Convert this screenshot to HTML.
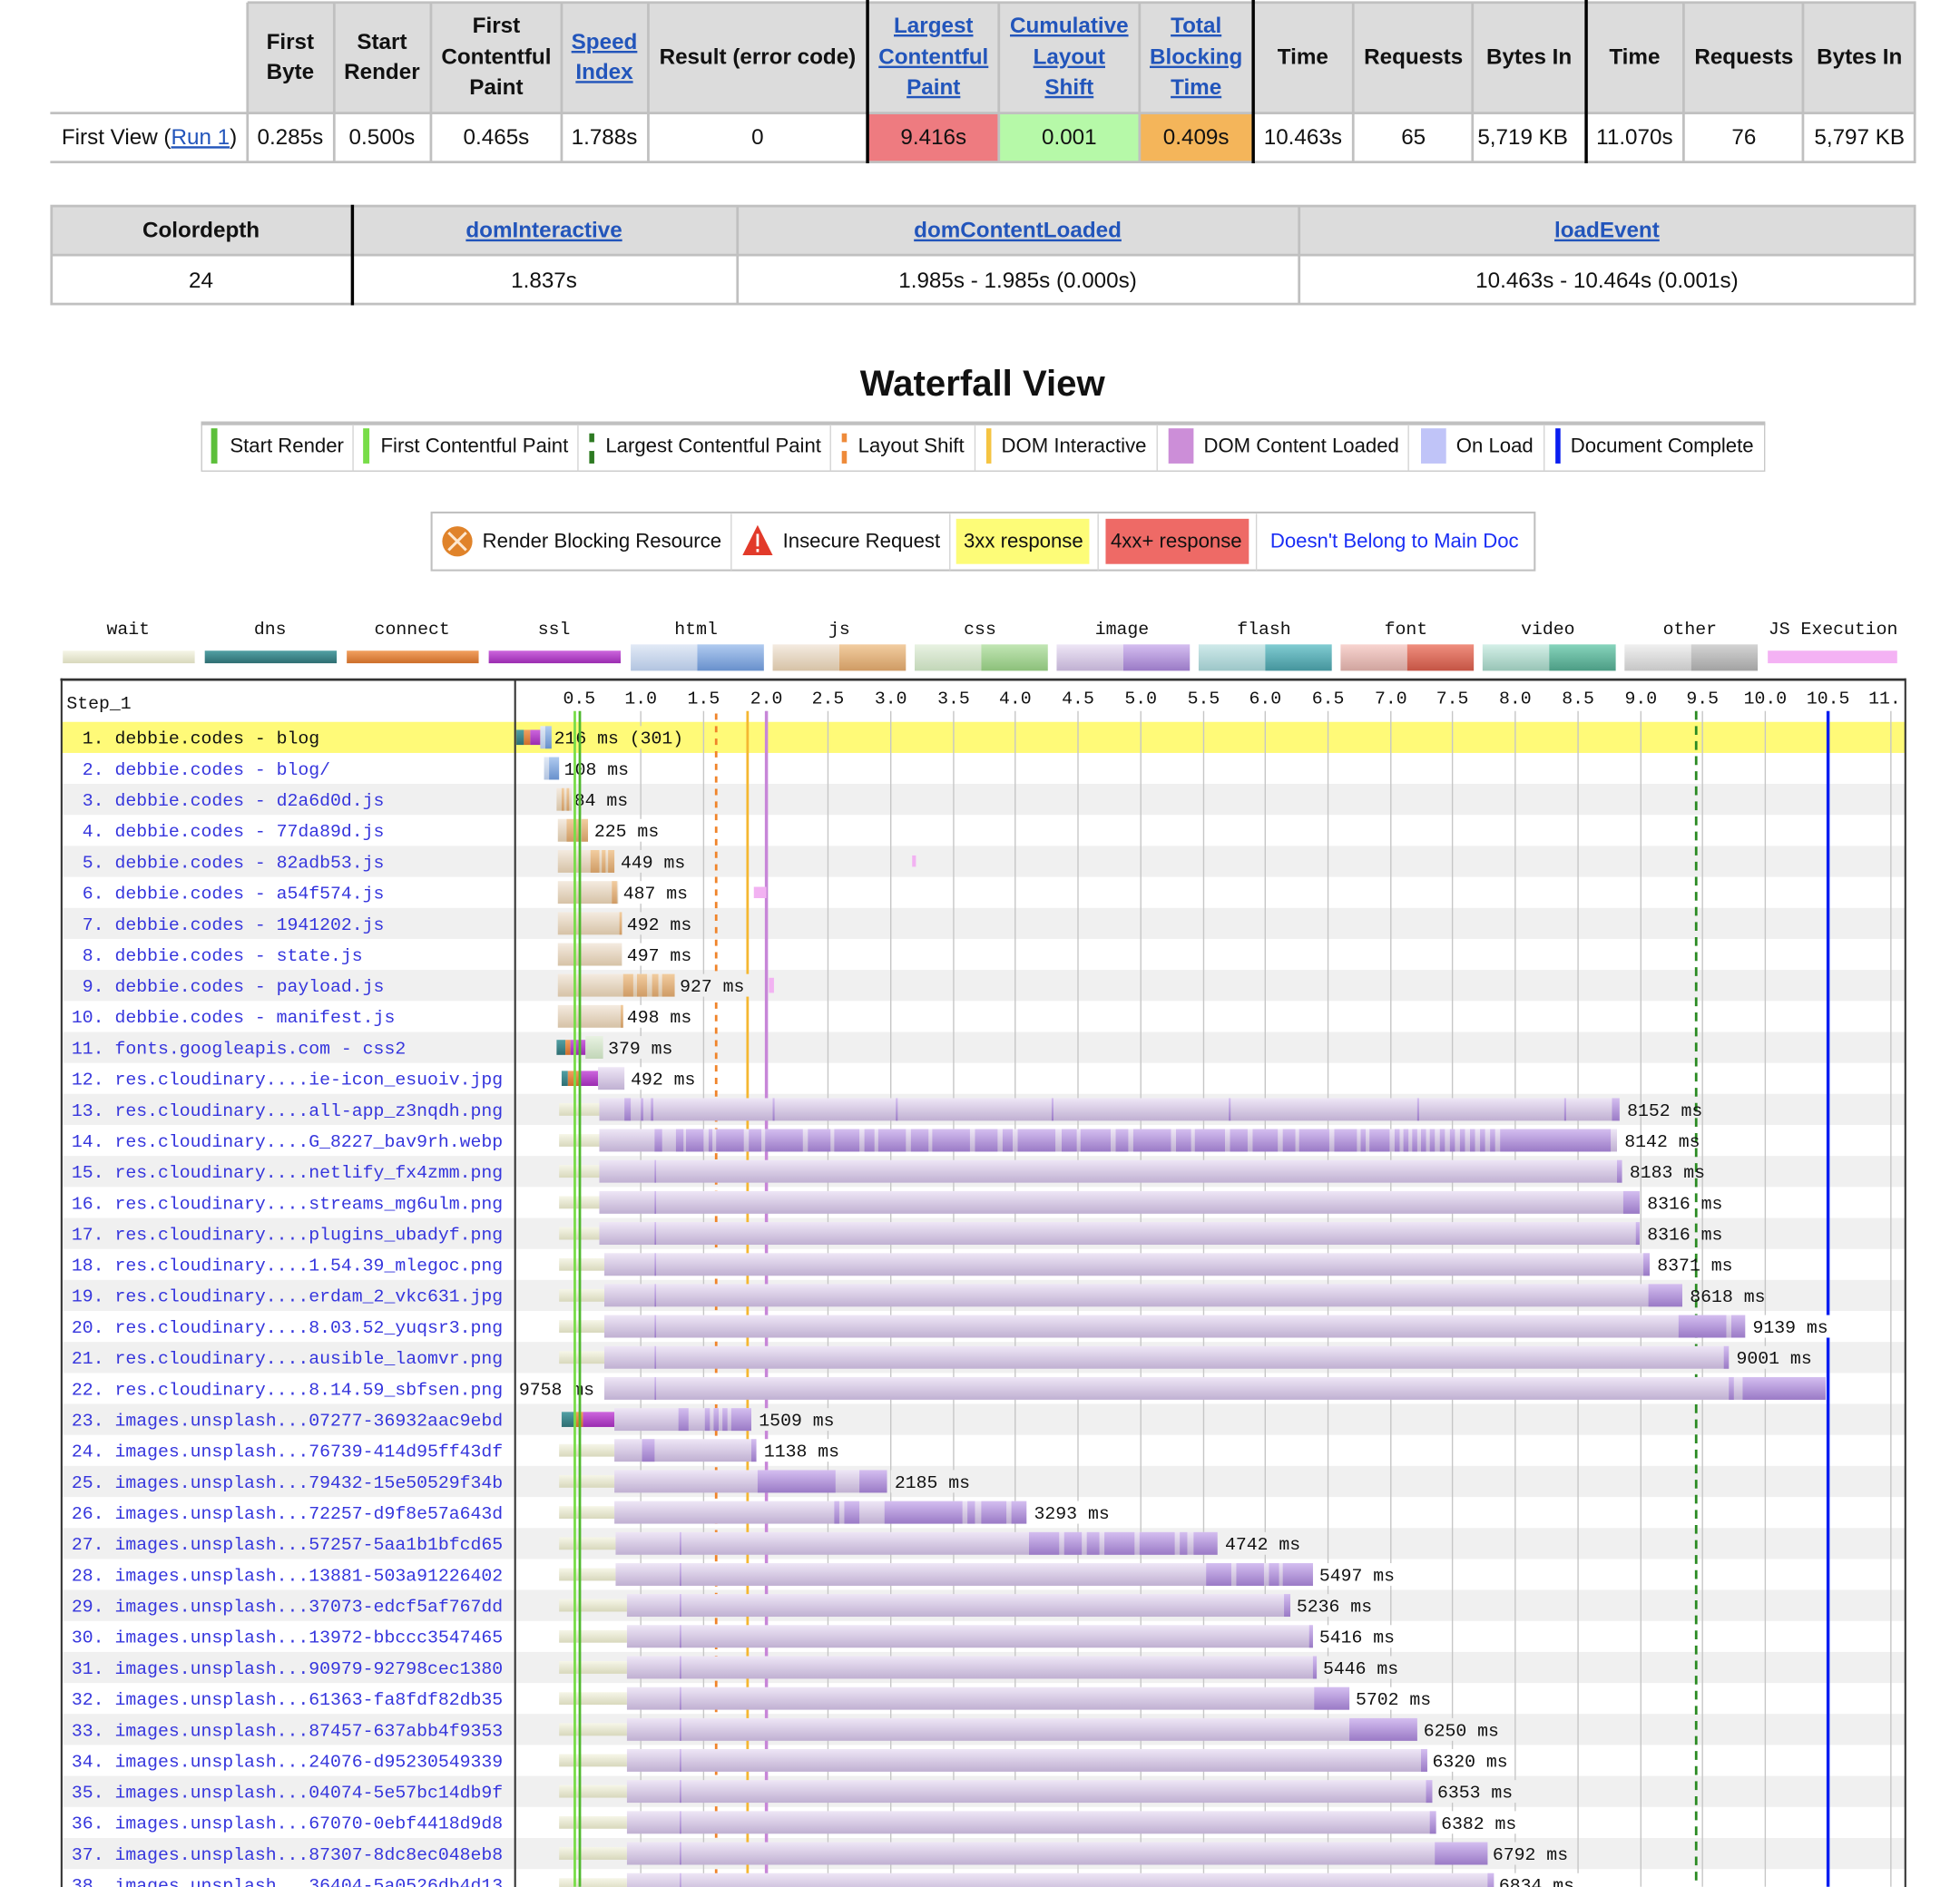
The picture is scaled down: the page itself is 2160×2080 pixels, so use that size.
<!DOCTYPE html>
<html><head><meta charset="utf-8"><style>
html,body{margin:0;padding:0;background:#fff;width:2160px;height:2080px;overflow:hidden}
svg{display:block}
.s{font-family:"Liberation Sans",Arial,sans-serif;font-size:17.5px;fill:#111}
.b{font-weight:bold}
.l{fill:#2255bb;text-decoration:underline}
.m{font-family:"Liberation Mono","DejaVu Sans Mono",monospace;font-size:14.3px;fill:#111}
.lb{fill:#3535dd}
.lg{font-family:"Liberation Sans",Arial,sans-serif;font-size:16px;fill:#111}
</style></head><body>
<svg width="2160" height="2080" viewBox="0 0 1560 1502.2" preserveAspectRatio="none" xmlns="http://www.w3.org/2000/svg">
<defs>
<linearGradient id="iL" x1="0" y1="0" x2="0" y2="1"><stop offset="0" stop-color="#eee6f6"/><stop offset="1" stop-color="#c0b0d2"/></linearGradient>
<linearGradient id="iD" x1="0" y1="0" x2="0" y2="1"><stop offset="0" stop-color="#d4bef0"/><stop offset="1" stop-color="#9a7ac6"/></linearGradient>
<linearGradient id="jL" x1="0" y1="0" x2="0" y2="1"><stop offset="0" stop-color="#f4ebe0"/><stop offset="1" stop-color="#d6c2a6"/></linearGradient>
<linearGradient id="jD" x1="0" y1="0" x2="0" y2="1"><stop offset="0" stop-color="#f2cda0"/><stop offset="1" stop-color="#cf9b64"/></linearGradient>
<linearGradient id="hL" x1="0" y1="0" x2="0" y2="1"><stop offset="0" stop-color="#e2eaf6"/><stop offset="1" stop-color="#b2c4e0"/></linearGradient>
<linearGradient id="hD" x1="0" y1="0" x2="0" y2="1"><stop offset="0" stop-color="#b0cbf0"/><stop offset="1" stop-color="#6890cc"/></linearGradient>
<linearGradient id="cL" x1="0" y1="0" x2="0" y2="1"><stop offset="0" stop-color="#e8f2e2"/><stop offset="1" stop-color="#c2d6b8"/></linearGradient>
<linearGradient id="cD" x1="0" y1="0" x2="0" y2="1"><stop offset="0" stop-color="#c2e6b4"/><stop offset="1" stop-color="#8cc07a"/></linearGradient>
<linearGradient id="fL" x1="0" y1="0" x2="0" y2="1"><stop offset="0" stop-color="#cfeaea"/><stop offset="1" stop-color="#9cc6c8"/></linearGradient>
<linearGradient id="fD" x1="0" y1="0" x2="0" y2="1"><stop offset="0" stop-color="#80ccd2"/><stop offset="1" stop-color="#45949c"/></linearGradient>
<linearGradient id="nL" x1="0" y1="0" x2="0" y2="1"><stop offset="0" stop-color="#f8d4d0"/><stop offset="1" stop-color="#d0a49e"/></linearGradient>
<linearGradient id="nD" x1="0" y1="0" x2="0" y2="1"><stop offset="0" stop-color="#f08e7e"/><stop offset="1" stop-color="#c45444"/></linearGradient>
<linearGradient id="vL" x1="0" y1="0" x2="0" y2="1"><stop offset="0" stop-color="#d4f0e8"/><stop offset="1" stop-color="#98c4b6"/></linearGradient>
<linearGradient id="vD" x1="0" y1="0" x2="0" y2="1"><stop offset="0" stop-color="#86d4bc"/><stop offset="1" stop-color="#4c9c84"/></linearGradient>
<linearGradient id="oL" x1="0" y1="0" x2="0" y2="1"><stop offset="0" stop-color="#f0f0f0"/><stop offset="1" stop-color="#c6c6c6"/></linearGradient>
<linearGradient id="oD" x1="0" y1="0" x2="0" y2="1"><stop offset="0" stop-color="#d4d4d4"/><stop offset="1" stop-color="#a2a2a2"/></linearGradient>
<linearGradient id="w" x1="0" y1="0" x2="0" y2="1"><stop offset="0" stop-color="#f6f6e8"/><stop offset="1" stop-color="#d8d8bc"/></linearGradient>
<linearGradient id="dn" x1="0" y1="0" x2="0" y2="1"><stop offset="0" stop-color="#52a0a4"/><stop offset="1" stop-color="#2e6e72"/></linearGradient>
<linearGradient id="co" x1="0" y1="0" x2="0" y2="1"><stop offset="0" stop-color="#f2a060"/><stop offset="1" stop-color="#cc6e2a"/></linearGradient>
<linearGradient id="ss" x1="0" y1="0" x2="0" y2="1"><stop offset="0" stop-color="#cc66dd"/><stop offset="1" stop-color="#9a2cb0"/></linearGradient>
</defs>

<!-- ===== Top table ===== -->
<rect x="197" y="2" width="1328" height="88" fill="#dcdcdc"/>
<rect x="690" y="90" width="105" height="40" fill="#ee7b80"/>
<rect x="795" y="90" width="112" height="40" fill="#b6f9a8"/>
<rect x="907" y="90" width="90" height="40" fill="#f4b55a"/>
<g stroke="#c0c0c0" stroke-width="2">
<line x1="197" y1="2" x2="1525" y2="2"/>
<line x1="40" y1="90" x2="1525" y2="90"/>
<line x1="40" y1="129" x2="1525" y2="129"/>
<line x1="197" y1="2" x2="197" y2="130"/>
<line x1="266" y1="2" x2="266" y2="130"/>
<line x1="343" y1="2" x2="343" y2="130"/>
<line x1="447" y1="2" x2="447" y2="130"/>
<line x1="516" y1="2" x2="516" y2="130"/>
<line x1="795" y1="2" x2="795" y2="130"/>
<line x1="907" y1="2" x2="907" y2="130"/>
<line x1="1077" y1="2" x2="1077" y2="130"/>
<line x1="1172" y1="2" x2="1172" y2="130"/>
<line x1="1340" y1="2" x2="1340" y2="130"/>
<line x1="1435" y1="2" x2="1435" y2="130"/>
<line x1="1524" y1="2" x2="1524" y2="130"/>
</g>
<g stroke="#000" stroke-width="2.5">
<line x1="690.5" y1="0" x2="690.5" y2="130"/>
<line x1="997.5" y1="0" x2="997.5" y2="130"/>
<line x1="1262.5" y1="0" x2="1262.5" y2="130"/>
</g>
<g class="s b" text-anchor="middle">
<text x="231" y="39">First</text><text x="231" y="63">Byte</text>
<text x="304" y="39">Start</text><text x="304" y="63">Render</text>
<text x="395" y="26">First</text><text x="395" y="51">Contentful</text><text x="395" y="75">Paint</text>
<text x="481" y="39" class="l">Speed</text><text x="481" y="63" class="l">Index</text>
<text x="603" y="51">Result (error code)</text>
<text x="743" y="26" class="l">Largest</text><text x="743" y="51" class="l">Contentful</text><text x="743" y="75" class="l">Paint</text>
<text x="851" y="26" class="l">Cumulative</text><text x="851" y="51" class="l">Layout</text><text x="851" y="75" class="l">Shift</text>
<text x="952" y="26" class="l">Total</text><text x="952" y="51" class="l">Blocking</text><text x="952" y="75" class="l">Time</text>
<text x="1037" y="51">Time</text><text x="1125" y="51">Requests</text><text x="1217" y="51">Bytes In</text>
<text x="1301" y="51">Time</text><text x="1388" y="51">Requests</text><text x="1480" y="51">Bytes In</text>
</g>
<g class="s" text-anchor="middle">
<text x="49" y="115" text-anchor="start">First View (<tspan class="l">Run 1</tspan>)</text>
<text x="231" y="115">0.285s</text><text x="304" y="115">0.500s</text><text x="395" y="115">0.465s</text>
<text x="481" y="115">1.788s</text><text x="603" y="115">0</text><text x="743" y="115">9.416s</text>
<text x="851" y="115">0.001</text><text x="952" y="115">0.409s</text><text x="1037" y="115">10.463s</text>
<text x="1125" y="115">65</text><text x="1212" y="115">5,719 KB</text><text x="1301" y="115">11.070s</text>
<text x="1388" y="115">76</text><text x="1480" y="115">5,797 KB</text>
</g>

<!-- ===== Second table ===== -->
<rect x="41" y="164" width="1483" height="39" fill="#dcdcdc"/>
<g stroke="#c0c0c0" stroke-width="2" fill="none">
<rect x="41" y="164" width="1483" height="78"/>
<line x1="41" y1="203" x2="1524" y2="203"/>
<line x1="587" y1="164" x2="587" y2="242"/>
<line x1="1034" y1="164" x2="1034" y2="242"/>
</g>
<line x1="280.5" y1="163" x2="280.5" y2="243" stroke="#000" stroke-width="2.5"/>
<g class="s" text-anchor="middle">
<text x="160" y="189" class="b">Colordepth</text>
<text x="433" y="189" class="b l">domInteractive</text>
<text x="810" y="189" class="b l">domContentLoaded</text>
<text x="1279" y="189" class="b l">loadEvent</text>
<text x="160" y="229">24</text>
<text x="433" y="229">1.837s</text>
<text x="810" y="229">1.985s - 1.985s (0.000s)</text>
<text x="1279" y="229">10.463s - 10.464s (0.001s)</text>
</g>

<!-- ===== Title ===== -->
<text x="782" y="315" text-anchor="middle" font-family="Liberation Sans,Arial,sans-serif" font-size="29" font-weight="bold" fill="#111">Waterfall View</text>

<!-- ===== Legend 1 ===== -->
<rect x="160.5" y="337" width="1244" height="38" fill="#fff" stroke="#c8c8c8" stroke-width="1"/>
<line x1="160" y1="337" x2="1405" y2="337" stroke="#c0c0c0" stroke-width="3"/>
<g stroke="#d4d4d4" stroke-width="1">
<line x1="281" y1="338" x2="281" y2="375"/><line x1="460" y1="338" x2="460" y2="375"/>
<line x1="661" y1="338" x2="661" y2="375"/><line x1="776" y1="338" x2="776" y2="375"/>
<line x1="921" y1="338" x2="921" y2="375"/><line x1="1121" y1="338" x2="1121" y2="375"/>
<line x1="1229" y1="338" x2="1229" y2="375"/>
</g>
<rect x="168" y="341" width="5" height="28" fill="#5cbf3a"/>
<rect x="289" y="341" width="5" height="28" fill="#78dd48"/>
<rect x="469" y="345" width="4" height="7" fill="#2d7a22"/><rect x="469" y="359" width="4" height="10" fill="#2d7a22"/>
<rect x="670" y="345" width="4" height="7" fill="#ee8a3a"/><rect x="670" y="359" width="4" height="10" fill="#ee8a3a"/>
<rect x="785" y="341" width="4" height="28" fill="#f5c442"/>
<rect x="930" y="341" width="20" height="28" fill="#cc8ed8"/>
<rect x="1131" y="341" width="20" height="28" fill="#c0c4f8"/>
<rect x="1238" y="341" width="4" height="28" fill="#0a1ef0"/>
<g class="lg">
<text x="183" y="360">Start Render</text>
<text x="303" y="360">First Contentful Paint</text>
<text x="482" y="360">Largest Contentful Paint</text>
<text x="683" y="360">Layout Shift</text>
<text x="797" y="360">DOM Interactive</text>
<text x="958" y="360">DOM Content Loaded</text>
<text x="1159" y="360">On Load</text>
<text x="1250" y="360">Document Complete</text>
</g>

<!-- ===== Legend 2 ===== -->
<rect x="343.5" y="408" width="878" height="46" fill="#fff" stroke="#c0c0c0" stroke-width="1.5"/>
<g stroke="#d4d4d4"><line x1="582" y1="409" x2="582" y2="454"/><line x1="756" y1="409" x2="756" y2="454"/><line x1="874" y1="409" x2="874" y2="454"/><line x1="1000" y1="409" x2="1000" y2="454"/></g>
<circle cx="364" cy="431" r="12" fill="#e0832a"/>
<path d="M357 424 L371 438 M371 424 L357 438" stroke="#fde8d0" stroke-width="2.2"/>
<path d="M603 418 L615 442 L591 442 Z" fill="#e23a2a"/>
<rect x="602" y="425" width="2" height="10" fill="#fff"/><rect x="602" y="437" width="2" height="2.5" fill="#fff"/>
<rect x="761" y="413" width="106" height="36" fill="#fdfc78"/>
<rect x="880" y="413" width="114" height="36" fill="#ee6a66"/>
<g class="lg">
<text x="384" y="436">Render Blocking Resource</text>
<text x="623" y="436">Insecure Request</text>
<text x="767" y="436">3xx response</text>
<text x="884" y="436">4xx+ response</text>
<text x="1011" y="436" fill="#1a2ef5">Doesn't Belong to Main Doc</text>
</g>

<!-- ===== Waterfall legend ===== -->
<g class="m" text-anchor="middle">
<text x="102" y="505">wait</text><text x="215" y="505">dns</text><text x="328" y="505">connect</text>
<text x="441" y="505">ssl</text><text x="554" y="505">html</text><text x="668" y="505">js</text>
<text x="780" y="505">css</text><text x="893" y="505">image</text><text x="1006" y="505">flash</text>
<text x="1119" y="505">font</text><text x="1232" y="505">video</text><text x="1345" y="505">other</text>
<text x="1459" y="505">JS Execution</text>
</g>
<rect x="50" y="518" width="105" height="10" fill="url(#w)"/>
<rect x="163" y="518" width="105" height="10" fill="url(#dn)"/>
<rect x="276" y="518" width="105" height="10" fill="url(#co)"/>
<rect x="389" y="518" width="105" height="10" fill="url(#ss)"/>
<rect x="502" y="513" width="53" height="21" fill="url(#hL)"/><rect x="555" y="513" width="53" height="21" fill="url(#hD)"/>
<rect x="615" y="513" width="53" height="21" fill="url(#jL)"/><rect x="668" y="513" width="53" height="21" fill="url(#jD)"/>
<rect x="728" y="513" width="53" height="21" fill="url(#cL)"/><rect x="781" y="513" width="53" height="21" fill="url(#cD)"/>
<rect x="841" y="513" width="53" height="21" fill="url(#iL)"/><rect x="894" y="513" width="53" height="21" fill="url(#iD)"/>
<rect x="954" y="513" width="53" height="21" fill="url(#fL)"/><rect x="1007" y="513" width="53" height="21" fill="url(#fD)"/>
<rect x="1067" y="513" width="53" height="21" fill="url(#nL)"/><rect x="1120" y="513" width="53" height="21" fill="url(#nD)"/>
<rect x="1180" y="513" width="53" height="21" fill="url(#vL)"/><rect x="1233" y="513" width="53" height="21" fill="url(#vD)"/>
<rect x="1293" y="513" width="53" height="21" fill="url(#oL)"/><rect x="1346" y="513" width="53" height="21" fill="url(#oD)"/>
<rect x="1407" y="518" width="103" height="10" fill="#f4b2f4"/>

<!-- ===== Waterfall chart ===== -->
<rect x="49" y="574.7" width="1467" height="24.7" fill="#fffa78"/>
<g fill="#f0f0f0">
<rect x="49" y="624.0" width="1467" height="24.7"/><rect x="49" y="673.4" width="1467" height="24.7"/>
<rect x="49" y="722.8" width="1467" height="24.7"/><rect x="49" y="772.1" width="1467" height="24.7"/>
<rect x="49" y="821.5" width="1467" height="24.7"/><rect x="49" y="870.8" width="1467" height="24.7"/>
<rect x="49" y="920.2" width="1467" height="24.7"/><rect x="49" y="969.6" width="1467" height="24.7"/>
<rect x="49" y="1018.9" width="1467" height="24.7"/><rect x="49" y="1068.3" width="1467" height="24.7"/>
<rect x="49" y="1117.6" width="1467" height="24.7"/><rect x="49" y="1167.0" width="1467" height="24.7"/>
<rect x="49" y="1216.4" width="1467" height="24.7"/><rect x="49" y="1265.7" width="1467" height="24.7"/>
<rect x="49" y="1315.1" width="1467" height="24.7"/><rect x="49" y="1364.4" width="1467" height="24.7"/>
<rect x="49" y="1413.8" width="1467" height="24.7"/><rect x="49" y="1463.2" width="1467" height="24.7"/>
</g>
<g stroke="#c6c6c6" stroke-width="1">
<line x1="510" y1="566" x2="510" y2="1502"/><line x1="560" y1="566" x2="560" y2="1502"/>
<line x1="610" y1="566" x2="610" y2="1502"/><line x1="659" y1="566" x2="659" y2="1502"/>
<line x1="709" y1="566" x2="709" y2="1502"/><line x1="759" y1="566" x2="759" y2="1502"/>
<line x1="808" y1="566" x2="808" y2="1502"/><line x1="858" y1="566" x2="858" y2="1502"/>
<line x1="908" y1="566" x2="908" y2="1502"/><line x1="958" y1="566" x2="958" y2="1502"/>
<line x1="1007" y1="566" x2="1007" y2="1502"/><line x1="1057" y1="566" x2="1057" y2="1502"/>
<line x1="1107" y1="566" x2="1107" y2="1502"/><line x1="1156" y1="566" x2="1156" y2="1502"/>
<line x1="1206" y1="566" x2="1206" y2="1502"/><line x1="1256" y1="566" x2="1256" y2="1502"/>
<line x1="1306" y1="566" x2="1306" y2="1502"/><line x1="1355" y1="566" x2="1355" y2="1502"/>
<line x1="1405" y1="566" x2="1405" y2="1502"/><line x1="1455" y1="566" x2="1455" y2="1502"/>
<line x1="1505" y1="566" x2="1505" y2="1502"/>
</g>
<g class="m" text-anchor="middle">
<text x="461" y="560">0.5</text><text x="510" y="560">1.0</text><text x="560" y="560">1.5</text>
<text x="610" y="560">2.0</text><text x="659" y="560">2.5</text><text x="709" y="560">3.0</text>
<text x="759" y="560">3.5</text><text x="808" y="560">4.0</text><text x="858" y="560">4.5</text>
<text x="908" y="560">5.0</text><text x="958" y="560">5.5</text><text x="1007" y="560">6.0</text>
<text x="1057" y="560">6.5</text><text x="1107" y="560">7.0</text><text x="1156" y="560">7.5</text>
<text x="1206" y="560">8.0</text><text x="1256" y="560">8.5</text><text x="1306" y="560">9.0</text>
<text x="1355" y="560">9.5</text><text x="1405" y="560">10.0</text><text x="1455" y="560">10.5</text>
<text x="1500" y="560">11.</text>
</g>
<text x="53" y="564" class="m">Step_1</text>
<line x1="570" y1="568" x2="570" y2="1502" stroke="#f0842a" stroke-width="2" stroke-dasharray="5,5"/>
<line x1="595" y1="566" x2="595" y2="1502" stroke="#f5b731" stroke-width="2"/>
<line x1="610" y1="566" x2="610" y2="1502" stroke="#c786d8" stroke-width="2.5"/>
<line x1="1350" y1="566" x2="1350" y2="1502" stroke="#2a8a22" stroke-width="2" stroke-dasharray="7,5"/>
<line x1="1455" y1="566" x2="1455" y2="1502" stroke="#0a1ef0" stroke-width="2.5"/>
<rect x="600" y="706" width="10" height="9" fill="#f2b2f2"/>
<rect x="726" y="681" width="3" height="9" fill="#f2b2f2"/>

<g transform="translate(0,587)">
<rect x="411" y="-6" width="6" height="12" fill="url(#dn)"/><rect x="417" y="-6" width="5" height="12" fill="url(#co)"/><rect x="422" y="-6" width="8" height="12" fill="url(#ss)"/>
<rect x="430" y="-9" width="4" height="18" fill="url(#hL)"/><rect x="434" y="-9" width="5" height="18" fill="url(#hD)"/>
<rect x="440" y="-9" width="106" height="18" fill="#fffa78"/>
<text x="441" y="5" class="m">216 ms (301)</text></g>
<g transform="translate(0,611.7)">
<rect x="433" y="-9" width="4" height="18" fill="url(#hL)"/><rect x="437" y="-9" width="8" height="18" fill="url(#hD)"/>
<rect x="447" y="-9" width="58" height="18" fill="#fff"/><text x="449" y="5" class="m">108 ms</text></g>
<g transform="translate(0,636.4)">
<rect x="443" y="-9" width="12" height="18" fill="url(#jL)"/><rect x="447" y="-9" width="2" height="18" fill="url(#jD)"/><rect x="451" y="-9" width="2" height="18" fill="url(#jD)"/>
<rect x="456" y="-9" width="48" height="18" fill="#f0f0f0"/><text x="457" y="5" class="m">84 ms</text></g>
<g transform="translate(0,661)">
<rect x="444" y="-9" width="24" height="18" fill="url(#jL)"/><rect x="451" y="-9" width="10" height="18" fill="url(#jD)"/><rect x="463" y="-9" width="5" height="18" fill="url(#jD)"/>
<rect x="471" y="-9" width="58" height="18" fill="#fff"/><text x="473" y="5" class="m">225 ms</text></g>
<g transform="translate(0,685.7)">
<rect x="444" y="-9" width="45" height="18" fill="url(#jL)"/><rect x="470" y="-9" width="7" height="18" fill="url(#jD)"/><rect x="479" y="-9" width="3" height="18" fill="url(#jD)"/><rect x="484" y="-9" width="5" height="18" fill="url(#jD)"/>
<rect x="492" y="-9" width="58" height="18" fill="#f0f0f0"/><text x="494" y="5" class="m">449 ms</text></g>
<g transform="translate(0,710.4)">
<rect x="444" y="-9" width="48" height="18" fill="url(#jL)"/><rect x="487" y="-9" width="4" height="18" fill="url(#jD)"/>
<rect x="494" y="-9" width="58" height="18" fill="#fff"/><text x="496" y="5" class="m">487 ms</text></g>
<g transform="translate(0,735.1)">
<rect x="444" y="-9" width="51" height="18" fill="url(#jL)"/><rect x="493" y="-9" width="2" height="18" fill="url(#jD)"/>
<rect x="497" y="-9" width="58" height="18" fill="#f0f0f0"/><text x="499" y="5" class="m">492 ms</text></g>
<g transform="translate(0,759.8)">
<rect x="444" y="-9" width="51" height="18" fill="url(#jL)"/>
<rect x="497" y="-9" width="58" height="18" fill="#fff"/><text x="499" y="5" class="m">497 ms</text></g>
<g transform="translate(0,784.4)">
<rect x="444" y="-9" width="93" height="18" fill="url(#jL)"/><rect x="496" y="-9" width="8" height="18" fill="url(#jD)"/><rect x="507" y="-9" width="8" height="18" fill="url(#jD)"/><rect x="519" y="-9" width="5" height="18" fill="url(#jD)"/><rect x="527" y="-9" width="10" height="18" fill="url(#jD)"/>
<rect x="539" y="-9" width="58" height="18" fill="#f0f0f0"/><text x="541" y="5" class="m">927 ms</text>
<rect x="612" y="-6" width="4" height="12" fill="#f2b2f2"/></g>
<g transform="translate(0,809.1)">
<rect x="444" y="-9" width="52" height="18" fill="url(#jL)"/><rect x="494" y="-9" width="2" height="18" fill="url(#jD)"/>
<rect x="497" y="-9" width="58" height="18" fill="#fff"/><text x="499" y="5" class="m">498 ms</text></g>
<g transform="translate(0,833.8)">
<rect x="443" y="-6" width="7" height="12" fill="url(#dn)"/><rect x="450" y="-6" width="4" height="12" fill="url(#co)"/><rect x="454" y="-6" width="12" height="12" fill="url(#ss)"/>
<rect x="466" y="-9" width="14" height="18" fill="url(#cL)"/>
<rect x="482" y="-9" width="58" height="18" fill="#f0f0f0"/><text x="484" y="5" class="m">379 ms</text></g>
<g transform="translate(0,858.5)">
<rect x="447" y="-6" width="5" height="12" fill="url(#dn)"/><rect x="452" y="-6" width="10" height="12" fill="url(#co)"/><rect x="462" y="-6" width="14" height="12" fill="url(#ss)"/>
<rect x="476" y="-9" width="21" height="18" fill="url(#iL)"/>
<rect x="500" y="-9" width="58" height="18" fill="#fff"/><text x="502" y="5" class="m">492 ms</text></g>

<g transform="translate(0,883.2)">
<rect x="445" y="-5" width="32" height="10" fill="url(#w)"/>
<rect x="477" y="-9" width="812" height="18" fill="url(#iL)"/>
<g fill="url(#iD)"><rect x="497" y="-9" width="5" height="18"/><rect x="510" y="-9" width="2" height="18"/><rect x="518" y="-9" width="2" height="18"/><rect x="615" y="-9" width="1.5" height="18"/><rect x="713" y="-9" width="1.5" height="18"/><rect x="837" y="-9" width="1.5" height="18"/><rect x="978" y="-9" width="1.5" height="18"/><rect x="1128" y="-9" width="1.5" height="18"/><rect x="1245" y="-9" width="1.5" height="18"/><rect x="1283" y="-9" width="6" height="18"/></g>
<text x="1295" y="5" class="m">8152 ms</text></g>
<g transform="translate(0,907.8)">
<rect x="445" y="-5" width="32" height="10" fill="url(#w)"/>
<rect x="477" y="-9" width="810" height="18" fill="url(#iL)"/>
<g fill="url(#iD)"><rect x="521" y="-9" width="6" height="18"/><rect x="538" y="-9" width="6" height="18"/><rect x="546" y="-9" width="14" height="18"/><rect x="564" y="-9" width="3" height="18"/><rect x="570" y="-9" width="22" height="18"/><rect x="596" y="-9" width="10" height="18"/><rect x="609" y="-9" width="30" height="18"/><rect x="643" y="-9" width="18" height="18"/><rect x="664" y="-9" width="20" height="18"/><rect x="688" y="-9" width="8" height="18"/><rect x="699" y="-9" width="22" height="18"/><rect x="725" y="-9" width="14" height="18"/><rect x="742" y="-9" width="30" height="18"/><rect x="776" y="-9" width="18" height="18"/><rect x="798" y="-9" width="8" height="18"/><rect x="810" y="-9" width="30" height="18"/><rect x="845" y="-9" width="12" height="18"/><rect x="860" y="-9" width="24" height="18"/><rect x="888" y="-9" width="10" height="18"/><rect x="902" y="-9" width="30" height="18"/><rect x="936" y="-9" width="12" height="18"/><rect x="951" y="-9" width="24" height="18"/><rect x="979" y="-9" width="14" height="18"/><rect x="997" y="-9" width="20" height="18"/><rect x="1021" y="-9" width="10" height="18"/><rect x="1034" y="-9" width="24" height="18"/><rect x="1062" y="-9" width="18" height="18"/><rect x="1083" y="-9" width="4" height="18"/><rect x="1090" y="-9" width="16" height="18"/><rect x="1110" y="-9" width="4" height="18"/><rect x="1117" y="-9" width="4" height="18"/><rect x="1124" y="-9" width="4" height="18"/><rect x="1131" y="-9" width="4" height="18"/><rect x="1138" y="-9" width="4" height="18"/><rect x="1146" y="-9" width="4" height="18"/><rect x="1154" y="-9" width="4" height="18"/><rect x="1162" y="-9" width="4" height="18"/><rect x="1170" y="-9" width="4" height="18"/><rect x="1178" y="-9" width="4" height="18"/><rect x="1186" y="-9" width="4" height="18"/><rect x="1194" y="-9" width="88" height="18"/></g>
<text x="1293" y="5" class="m">8142 ms</text></g>
<g transform="translate(0,932.5)">
<rect x="445" y="-5" width="32" height="10" fill="url(#w)"/>
<rect x="477" y="-9" width="814" height="18" fill="url(#iL)"/><rect x="521" y="-9" width="1.2" height="18" fill="url(#iD)"/><rect x="1287" y="-9" width="4" height="18" fill="url(#iD)"/>
<text x="1297" y="5" class="m">8183 ms</text></g>
<g transform="translate(0,957.2)">
<rect x="445" y="-5" width="32" height="10" fill="url(#w)"/>
<rect x="477" y="-9" width="828" height="18" fill="url(#iL)"/><rect x="521" y="-9" width="1.2" height="18" fill="url(#iD)"/><rect x="1292" y="-9" width="13" height="18" fill="url(#iD)"/>
<text x="1311" y="5" class="m">8316 ms</text></g>
<g transform="translate(0,981.9)">
<rect x="445" y="-5" width="32" height="10" fill="url(#w)"/>
<rect x="477" y="-9" width="828" height="18" fill="url(#iL)"/><rect x="521" y="-9" width="1.2" height="18" fill="url(#iD)"/><rect x="1302" y="-9" width="3" height="18" fill="url(#iD)"/>
<text x="1311" y="5" class="m">8316 ms</text></g>
<g transform="translate(0,1006.6)">
<rect x="445" y="-5" width="36" height="10" fill="url(#w)"/>
<rect x="481" y="-9" width="832" height="18" fill="url(#iL)"/><rect x="521" y="-9" width="1.2" height="18" fill="url(#iD)"/><rect x="1308" y="-9" width="5" height="18" fill="url(#iD)"/>
<text x="1319" y="5" class="m">8371 ms</text></g>
<g transform="translate(0,1031.2)">
<rect x="445" y="-5" width="36" height="10" fill="url(#w)"/>
<rect x="481" y="-9" width="858" height="18" fill="url(#iL)"/><rect x="521" y="-9" width="1.2" height="18" fill="url(#iD)"/><rect x="1312" y="-9" width="27" height="18" fill="url(#iD)"/>
<text x="1345" y="5" class="m">8618 ms</text></g>
<g transform="translate(0,1055.9)">
<rect x="445" y="-5" width="36" height="10" fill="url(#w)"/>
<rect x="481" y="-9" width="908" height="18" fill="url(#iL)"/><rect x="521" y="-9" width="1.2" height="18" fill="url(#iD)"/><rect x="1336" y="-9" width="38" height="18" fill="url(#iD)"/><rect x="1378" y="-9" width="11" height="18" fill="url(#iD)"/>
<rect x="1392" y="-9" width="70" height="18" fill="#fff"/><text x="1395" y="5" class="m">9139 ms</text></g>
<g transform="translate(0,1080.6)">
<rect x="445" y="-5" width="36" height="10" fill="url(#w)"/>
<rect x="481" y="-9" width="895" height="18" fill="url(#iL)"/><rect x="521" y="-9" width="1.2" height="18" fill="url(#iD)"/><rect x="1372" y="-9" width="4" height="18" fill="url(#iD)"/>
<rect x="1380" y="-9" width="70" height="18" fill="#f0f0f0"/><text x="1382" y="5" class="m">9001 ms</text></g>
<g transform="translate(0,1105.3)">
<rect x="411" y="-9" width="70" height="18" fill="#fff"/><text x="413" y="5" class="m">9758 ms</text>
<rect x="481" y="-9" width="972" height="18" fill="url(#iL)"/><rect x="521" y="-9" width="1.2" height="18" fill="url(#iD)"/><rect x="1376" y="-9" width="4" height="18" fill="url(#iD)"/><rect x="1387" y="-9" width="66" height="18" fill="url(#iD)"/></g>

<g transform="translate(0,1130)">
<rect x="447" y="-6" width="11" height="12" fill="url(#dn)"/><rect x="458" y="-6" width="6" height="12" fill="url(#co)"/><rect x="464" y="-6" width="25" height="12" fill="url(#ss)"/>
<rect x="489" y="-9" width="109" height="18" fill="url(#iL)"/><rect x="540" y="-9" width="8" height="18" fill="url(#iD)"/><rect x="561" y="-9" width="4" height="18" fill="url(#iD)"/><rect x="568" y="-9" width="4" height="18" fill="url(#iD)"/><rect x="575" y="-9" width="4" height="18" fill="url(#iD)"/><rect x="582" y="-9" width="16" height="18" fill="url(#iD)"/>
<rect x="601" y="-9" width="66" height="18" fill="#f0f0f0"/><text x="604" y="5" class="m">1509 ms</text></g>
<g transform="translate(0,1154.6)">
<rect x="445" y="-5" width="44" height="10" fill="url(#w)"/>
<rect x="489" y="-9" width="113" height="18" fill="url(#iL)"/><rect x="511" y="-9" width="10" height="18" fill="url(#iD)"/><rect x="598" y="-9" width="4" height="18" fill="url(#iD)"/>
<rect x="605" y="-9" width="66" height="18" fill="#fff"/><text x="608" y="5" class="m">1138 ms</text></g>
<g transform="translate(0,1179.3)">
<rect x="445" y="-5" width="44" height="10" fill="url(#w)"/>
<rect x="489" y="-9" width="217" height="18" fill="url(#iL)"/><rect x="603" y="-9" width="62" height="18" fill="url(#iD)"/><rect x="684" y="-9" width="22" height="18" fill="url(#iD)"/>
<rect x="709" y="-9" width="66" height="18" fill="#f0f0f0"/><text x="712" y="5" class="m">2185 ms</text></g>
<g transform="translate(0,1204)">
<rect x="445" y="-5" width="44" height="10" fill="url(#w)"/>
<rect x="489" y="-9" width="328" height="18" fill="url(#iL)"/><rect x="664" y="-9" width="4" height="18" fill="url(#iD)"/><rect x="672" y="-9" width="12" height="18" fill="url(#iD)"/><rect x="704" y="-9" width="62" height="18" fill="url(#iD)"/><rect x="770" y="-9" width="6" height="18" fill="url(#iD)"/><rect x="781" y="-9" width="20" height="18" fill="url(#iD)"/><rect x="805" y="-9" width="12" height="18" fill="url(#iD)"/>
<rect x="820" y="-9" width="66" height="18" fill="#fff"/><text x="823" y="5" class="m">3293 ms</text></g>
<g transform="translate(0,1228.7)">
<rect x="445" y="-5" width="45" height="10" fill="url(#w)"/>
<rect x="490" y="-9" width="479" height="18" fill="url(#iL)"/><rect x="541" y="-9" width="1.2" height="18" fill="url(#iD)"/><rect x="819" y="-9" width="24" height="18" fill="url(#iD)"/><rect x="847" y="-9" width="14" height="18" fill="url(#iD)"/><rect x="865" y="-9" width="10" height="18" fill="url(#iD)"/><rect x="879" y="-9" width="24" height="18" fill="url(#iD)"/><rect x="907" y="-9" width="28" height="18" fill="url(#iD)"/><rect x="939" y="-9" width="6" height="18" fill="url(#iD)"/><rect x="950" y="-9" width="19" height="18" fill="url(#iD)"/>
<rect x="972" y="-9" width="66" height="18" fill="#f0f0f0"/><text x="975" y="5" class="m">4742 ms</text></g>
<g transform="translate(0,1253.4)">
<rect x="445" y="-5" width="45" height="10" fill="url(#w)"/>
<rect x="490" y="-9" width="555" height="18" fill="url(#iL)"/><rect x="541" y="-9" width="1.2" height="18" fill="url(#iD)"/><rect x="960" y="-9" width="20" height="18" fill="url(#iD)"/><rect x="984" y="-9" width="22" height="18" fill="url(#iD)"/><rect x="1010" y="-9" width="8" height="18" fill="url(#iD)"/><rect x="1021" y="-9" width="24" height="18" fill="url(#iD)"/>
<rect x="1047" y="-9" width="66" height="18" fill="#fff"/><text x="1050" y="5" class="m">5497 ms</text></g>
<g transform="translate(0,1278)">
<rect x="445" y="-5" width="54" height="10" fill="url(#w)"/>
<rect x="499" y="-9" width="528" height="18" fill="url(#iL)"/><rect x="541" y="-9" width="1.2" height="18" fill="url(#iD)"/><rect x="1022" y="-9" width="5" height="18" fill="url(#iD)"/>
<rect x="1030" y="-9" width="66" height="18" fill="#f0f0f0"/><text x="1032" y="5" class="m">5236 ms</text></g>
<g transform="translate(0,1302.7)">
<rect x="445" y="-5" width="54" height="10" fill="url(#w)"/>
<rect x="499" y="-9" width="546" height="18" fill="url(#iL)"/><rect x="541" y="-9" width="1.2" height="18" fill="url(#iD)"/><rect x="1042" y="-9" width="3" height="18" fill="url(#iD)"/>
<rect x="1047" y="-9" width="66" height="18" fill="#fff"/><text x="1050" y="5" class="m">5416 ms</text></g>
<g transform="translate(0,1327.4)">
<rect x="445" y="-5" width="54" height="10" fill="url(#w)"/>
<rect x="499" y="-9" width="549" height="18" fill="url(#iL)"/><rect x="541" y="-9" width="1.2" height="18" fill="url(#iD)"/><rect x="1045" y="-9" width="3" height="18" fill="url(#iD)"/>
<rect x="1050" y="-9" width="66" height="18" fill="#f0f0f0"/><text x="1053" y="5" class="m">5446 ms</text></g>
<g transform="translate(0,1352.1)">
<rect x="445" y="-5" width="54" height="10" fill="url(#w)"/>
<rect x="499" y="-9" width="575" height="18" fill="url(#iL)"/><rect x="541" y="-9" width="1.2" height="18" fill="url(#iD)"/><rect x="1046" y="-9" width="28" height="18" fill="url(#iD)"/>
<rect x="1076" y="-9" width="66" height="18" fill="#fff"/><text x="1079" y="5" class="m">5702 ms</text></g>
<g transform="translate(0,1376.8)">
<rect x="445" y="-5" width="54" height="10" fill="url(#w)"/>
<rect x="499" y="-9" width="629" height="18" fill="url(#iL)"/><rect x="541" y="-9" width="1.2" height="18" fill="url(#iD)"/><rect x="1074" y="-9" width="54" height="18" fill="url(#iD)"/>
<rect x="1130" y="-9" width="66" height="18" fill="#f0f0f0"/><text x="1133" y="5" class="m">6250 ms</text></g>
<g transform="translate(0,1401.4)">
<rect x="445" y="-5" width="54" height="10" fill="url(#w)"/>
<rect x="499" y="-9" width="637" height="18" fill="url(#iL)"/><rect x="541" y="-9" width="1.2" height="18" fill="url(#iD)"/><rect x="1131" y="-9" width="5" height="18" fill="url(#iD)"/>
<rect x="1138" y="-9" width="66" height="18" fill="#fff"/><text x="1140" y="5" class="m">6320 ms</text></g>
<g transform="translate(0,1426.1)">
<rect x="445" y="-5" width="54" height="10" fill="url(#w)"/>
<rect x="499" y="-9" width="641" height="18" fill="url(#iL)"/><rect x="541" y="-9" width="1.2" height="18" fill="url(#iD)"/><rect x="1135" y="-9" width="5" height="18" fill="url(#iD)"/>
<rect x="1142" y="-9" width="66" height="18" fill="#f0f0f0"/><text x="1144" y="5" class="m">6353 ms</text></g>
<g transform="translate(0,1450.8)">
<rect x="445" y="-5" width="54" height="10" fill="url(#w)"/>
<rect x="499" y="-9" width="644" height="18" fill="url(#iL)"/><rect x="541" y="-9" width="1.2" height="18" fill="url(#iD)"/><rect x="1138" y="-9" width="5" height="18" fill="url(#iD)"/>
<rect x="1145" y="-9" width="66" height="18" fill="#fff"/><text x="1147" y="5" class="m">6382 ms</text></g>
<g transform="translate(0,1475.5)">
<rect x="445" y="-5" width="54" height="10" fill="url(#w)"/>
<rect x="499" y="-9" width="685" height="18" fill="url(#iL)"/><rect x="541" y="-9" width="1.2" height="18" fill="url(#iD)"/><rect x="1142" y="-9" width="42" height="18" fill="url(#iD)"/>
<rect x="1186" y="-9" width="66" height="18" fill="#f0f0f0"/><text x="1188" y="5" class="m">6792 ms</text></g>
<g transform="translate(0,1500.2)">
<rect x="445" y="-5" width="54" height="10" fill="url(#w)"/>
<rect x="499" y="-9" width="690" height="18" fill="url(#iL)"/><rect x="541" y="-9" width="1.2" height="18" fill="url(#iD)"/><rect x="1184" y="-9" width="5" height="18" fill="url(#iD)"/>
<rect x="1191" y="-9" width="66" height="18" fill="#fff"/><text x="1193" y="5" class="m">6834 ms</text></g>

<line x1="457.5" y1="566" x2="457.5" y2="1502" stroke="#78dd48" stroke-width="2"/>
<line x1="461.5" y1="566" x2="461.5" y2="1502" stroke="#4fb82e" stroke-width="2"/>

<g class="m">
<text x="57" y="592" xml:space="preserve"> 1. debbie.codes - blog</text>
<g class="lb">
<text x="57" y="616.7" xml:space="preserve"> 2. debbie.codes - blog/</text>
<text x="57" y="641.4" xml:space="preserve"> 3. debbie.codes - d2a6d0d.js</text>
<text x="57" y="666" xml:space="preserve"> 4. debbie.codes - 77da89d.js</text>
<text x="57" y="690.7" xml:space="preserve"> 5. debbie.codes - 82adb53.js</text>
<text x="57" y="715.4" xml:space="preserve"> 6. debbie.codes - a54f574.js</text>
<text x="57" y="740.1" xml:space="preserve"> 7. debbie.codes - 1941202.js</text>
<text x="57" y="764.8" xml:space="preserve"> 8. debbie.codes - state.js</text>
<text x="57" y="789.4" xml:space="preserve"> 9. debbie.codes - payload.js</text>
<text x="57" y="814.1">10. debbie.codes - manifest.js</text>
<text x="57" y="838.8">11. fonts.googleapis.com - css2</text>
<text x="57" y="863.5">12. res.cloudinary....ie-icon_esuoiv.jpg</text>
<text x="57" y="888.2">13. res.cloudinary....all-app_z3nqdh.png</text>
<text x="57" y="912.8">14. res.cloudinary....G_8227_bav9rh.webp</text>
<text x="57" y="937.5">15. res.cloudinary....netlify_fx4zmm.png</text>
<text x="57" y="962.2">16. res.cloudinary....streams_mg6ulm.png</text>
<text x="57" y="986.9">17. res.cloudinary....plugins_ubadyf.png</text>
<text x="57" y="1011.6">18. res.cloudinary....1.54.39_mlegoc.png</text>
<text x="57" y="1036.2">19. res.cloudinary....erdam_2_vkc631.jpg</text>
<text x="57" y="1060.9">20. res.cloudinary....8.03.52_yuqsr3.png</text>
<text x="57" y="1085.6">21. res.cloudinary....ausible_laomvr.png</text>
<text x="57" y="1110.3">22. res.cloudinary....8.14.59_sbfsen.png</text>
<text x="57" y="1135">23. images.unsplash...07277-36932aac9ebd</text>
<text x="57" y="1159.6">24. images.unsplash...76739-414d95ff43df</text>
<text x="57" y="1184.3">25. images.unsplash...79432-15e50529f34b</text>
<text x="57" y="1209">26. images.unsplash...72257-d9f8e57a643d</text>
<text x="57" y="1233.7">27. images.unsplash...57257-5aa1b1bfcd65</text>
<text x="57" y="1258.4">28. images.unsplash...13881-503a91226402</text>
<text x="57" y="1283">29. images.unsplash...37073-edcf5af767dd</text>
<text x="57" y="1307.7">30. images.unsplash...13972-bbccc3547465</text>
<text x="57" y="1332.4">31. images.unsplash...90979-92798cec1380</text>
<text x="57" y="1357.1">32. images.unsplash...61363-fa8fdf82db35</text>
<text x="57" y="1381.8">33. images.unsplash...87457-637abb4f9353</text>
<text x="57" y="1406.4">34. images.unsplash...24076-d95230549339</text>
<text x="57" y="1431.1">35. images.unsplash...04074-5e57bc14db9f</text>
<text x="57" y="1455.8">36. images.unsplash...67070-0ebf4418d9d8</text>
<text x="57" y="1480.5">37. images.unsplash...87307-8dc8ec048eb8</text>
<text x="57" y="1505.2">38. images.unsplash...36404-5a0526db4d13</text>
</g></g>

<line x1="48" y1="541" x2="1517" y2="541" stroke="#333" stroke-width="2"/>
<line x1="49" y1="540" x2="49" y2="1503" stroke="#333" stroke-width="1.5"/>
<line x1="1516.5" y1="540" x2="1516.5" y2="1503" stroke="#333" stroke-width="1.5"/>
<line x1="410" y1="541" x2="410" y2="1503" stroke="#333" stroke-width="1.5"/>
</svg>
</body></html>
